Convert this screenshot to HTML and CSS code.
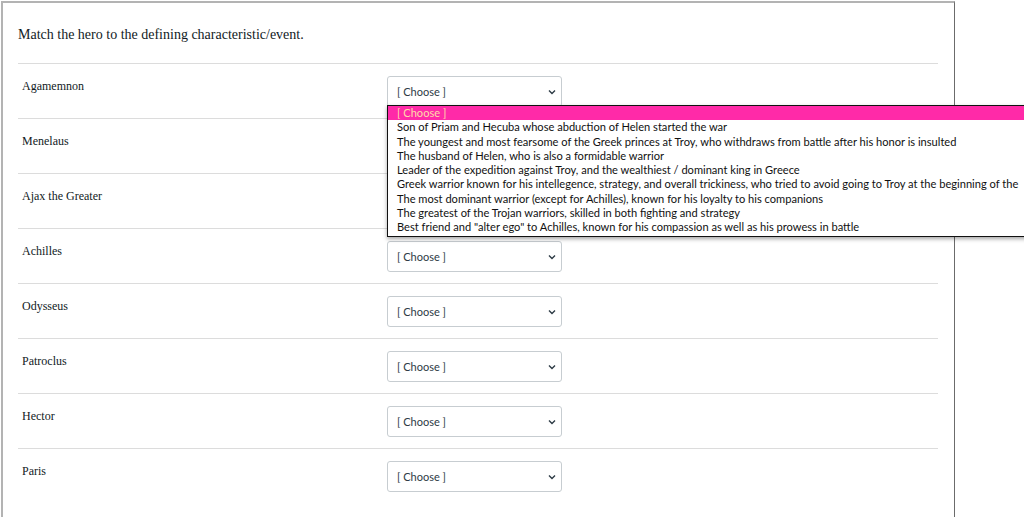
FILE: index.html
```html
<!DOCTYPE html>
<html lang="en">
<head>
    <meta charset="UTF-8">
    <title>Match the hero</title>
    <link rel="stylesheet" href="styles.css">
</head>
<body>
    <div class="quiz">
        <p class="question">Match the hero to the defining characteristic/event.</p>

        <div class="match-row">
            <span class="hero">Agamemnon</span>
            <div class="select-wrap open">
                <select class="answer"><option>[ Choose ]</option></select>
                <svg class="chevron" width="8" height="6" viewBox="0 0 8 6"><path d="M1 1.5 L4 4.5 L7 1.5" fill="none" stroke="#2d3b45" stroke-width="1.4"/></svg>
                <ul class="options">
                    <li class="selected">[ Choose ]</li>
                    <li>Son of Priam and Hecuba whose abduction of Helen started the war</li>
                    <li>The youngest and most fearsome of the Greek princes at Troy, who withdraws from battle after his honor is insulted</li>
                    <li>The husband of Helen, who is also a formidable warrior</li>
                    <li>Leader of the expedition against Troy, and the wealthiest / dominant king in Greece</li>
                    <li>Greek warrior known for his intellegence, strategy, and overall trickiness, who tried to avoid going to Troy at the beginning of the</li>
                    <li>The most dominant warrior (except for Achilles), known for his loyalty to his companions</li>
                    <li>The greatest of the Trojan warriors, skilled in both fighting and strategy</li>
                    <li>Best friend and "alter ego" to Achilles, known for his compassion as well as his prowess in battle</li>
                </ul>
            </div>
        </div>

        <div class="match-row">
            <span class="hero">Menelaus</span>
            <div class="select-wrap">
                <select class="answer"><option>[ Choose ]</option></select>
                <svg class="chevron" width="8" height="6" viewBox="0 0 8 6"><path d="M1 1.5 L4 4.5 L7 1.5" fill="none" stroke="#2d3b45" stroke-width="1.4"/></svg>
            </div>
        </div>

        <div class="match-row">
            <span class="hero">Ajax the Greater</span>
            <div class="select-wrap">
                <select class="answer"><option>[ Choose ]</option></select>
                <svg class="chevron" width="8" height="6" viewBox="0 0 8 6"><path d="M1 1.5 L4 4.5 L7 1.5" fill="none" stroke="#2d3b45" stroke-width="1.4"/></svg>
            </div>
        </div>

        <div class="match-row">
            <span class="hero">Achilles</span>
            <div class="select-wrap">
                <select class="answer"><option>[ Choose ]</option></select>
                <svg class="chevron" width="8" height="6" viewBox="0 0 8 6"><path d="M1 1.5 L4 4.5 L7 1.5" fill="none" stroke="#2d3b45" stroke-width="1.4"/></svg>
            </div>
        </div>

        <div class="match-row">
            <span class="hero">Odysseus</span>
            <div class="select-wrap">
                <select class="answer"><option>[ Choose ]</option></select>
                <svg class="chevron" width="8" height="6" viewBox="0 0 8 6"><path d="M1 1.5 L4 4.5 L7 1.5" fill="none" stroke="#2d3b45" stroke-width="1.4"/></svg>
            </div>
        </div>

        <div class="match-row">
            <span class="hero">Patroclus</span>
            <div class="select-wrap">
                <select class="answer"><option>[ Choose ]</option></select>
                <svg class="chevron" width="8" height="6" viewBox="0 0 8 6"><path d="M1 1.5 L4 4.5 L7 1.5" fill="none" stroke="#2d3b45" stroke-width="1.4"/></svg>
            </div>
        </div>

        <div class="match-row">
            <span class="hero">Hector</span>
            <div class="select-wrap">
                <select class="answer"><option>[ Choose ]</option></select>
                <svg class="chevron" width="8" height="6" viewBox="0 0 8 6"><path d="M1 1.5 L4 4.5 L7 1.5" fill="none" stroke="#2d3b45" stroke-width="1.4"/></svg>
            </div>
        </div>

        <div class="match-row">
            <span class="hero">Paris</span>
            <div class="select-wrap">
                <select class="answer"><option>[ Choose ]</option></select>
                <svg class="chevron" width="8" height="6" viewBox="0 0 8 6"><path d="M1 1.5 L4 4.5 L7 1.5" fill="none" stroke="#2d3b45" stroke-width="1.4"/></svg>
            </div>
        </div>
    </div>
</body>
</html>
```

FILE: styles.css
```css
html, body {
    overflow: hidden;
}

body {
    margin: 0;
    padding: 0;
    background: white;
    font-family: 'Liberation Serif', serif;
    color: #111a24;
}

/* Boite de la question */
.quiz {
    width: 920px;
    min-height: 600px;
    margin: 1px 0 0 1px;
    padding: 0 16px 0 15px;
    border-top: 2px solid #b3b3b3;
    border-left: 2px solid #b3b3b3;
    border-right: 1px solid #6b6b6b;
}

.question {
    margin: 0;
    padding: 24px 0 20px;
    font-size: 14px;
    line-height: 16px;
}

.match-row {
    display: grid;
    grid-template-columns: 369px 175px;
    height: 54px;
    border-top: 1px solid #dcdcdc;
}

.hero {
    padding: 15px 0 0 4px;
    font-size: 12px;
    line-height: 14px;
}

.select-wrap {
    position: relative;
    margin-top: 12px;
    height: 31px;
}

.answer {
    appearance: none;
    -webkit-appearance: none;
    width: 175px;
    height: 31px;
    margin: 0;
    padding: 0 0 0 9px;
    border: 1px solid #c7cdd1;
    border-radius: 3px;
    background: white;
    font-family: 'Lato', sans-serif;
    font-size: 11px;
    color: #2d3b45;
}

.chevron {
    position: absolute;
    top: 13px;
    right: 6px;
    pointer-events: none;
}

/* Liste deroulante ouverte */
.options {
    position: absolute;
    top: 29px;
    left: 0;
    z-index: 10;
    width: 720px;
    margin: 0;
    padding: 0 0 1px;
    list-style: none;
    background: white;
    border: 1px solid #111;
    box-shadow: 0px 2px 4px rgba(0, 0, 0, 0.35);
    font-family: 'Lato', sans-serif;
    font-size: 11.1px;
    line-height: 14.3px;
    color: #111;
}

.options li {
    padding-left: 9px;
    white-space: nowrap;
}

.options .selected {
    background: #ff2aa8;
    color: #ffd9a8;
}
```
